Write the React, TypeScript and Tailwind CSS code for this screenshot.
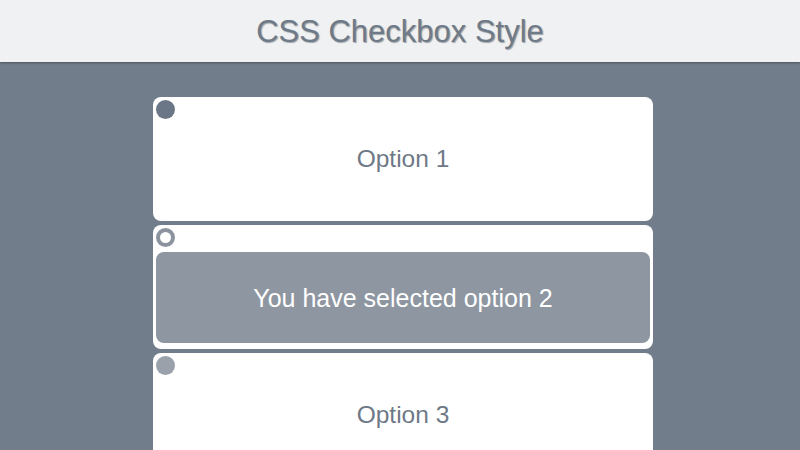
import React from "react";

export default function App() {
  return (
    <div className="w-[800px] h-[450px] overflow-hidden bg-[#717d8b] font-['Liberation_Sans',Arial,sans-serif]">
      <header className="h-[62px] bg-[#f0f1f3] flex items-center justify-center shadow-[0_1px_2px_rgba(0,0,0,0.35)] relative z-10">
        <h1 className="text-[31px] leading-none text-[#6f7a88] [text-shadow:1px_1px_1px_rgba(60,70,80,0.45)] mt-[1px]">
          CSS Checkbox Style
        </h1>
      </header>
      <div className="w-[500px] ml-[153px] mt-[35px] flex flex-col gap-[4px]">
        <div className="h-[124px] bg-white rounded-[8px] relative flex items-center justify-center">
          <div className="absolute left-[3px] top-[3px] w-[19px] h-[19px] rounded-full bg-[#6b7786]" />
          <span className="text-[24.5px] text-[#6e7987]">Option 1</span>
        </div>
        <div className="h-[124px] bg-white rounded-[8px] flex flex-col px-[3px] pt-[3px] pb-[6px]">
          <div className="h-[24px] shrink-0">
            <div className="w-[19px] h-[19px] rounded-full border-[4px] border-[#8c939e] bg-white" />
          </div>
          <div className="flex-1 bg-[#8e96a1] rounded-[8px] flex items-center justify-center pt-[3px]">
            <span className="text-[25px] text-white">You have selected option 2</span>
          </div>
        </div>
        <div className="h-[124px] bg-white rounded-[8px] relative flex items-center justify-center">
          <div className="absolute left-[3px] top-[3px] w-[19px] h-[19px] rounded-full bg-[#9aa1ab]" />
          <span className="text-[24.5px] text-[#6e7987]">Option 3</span>
        </div>
      </div>
    </div>
  );
}
